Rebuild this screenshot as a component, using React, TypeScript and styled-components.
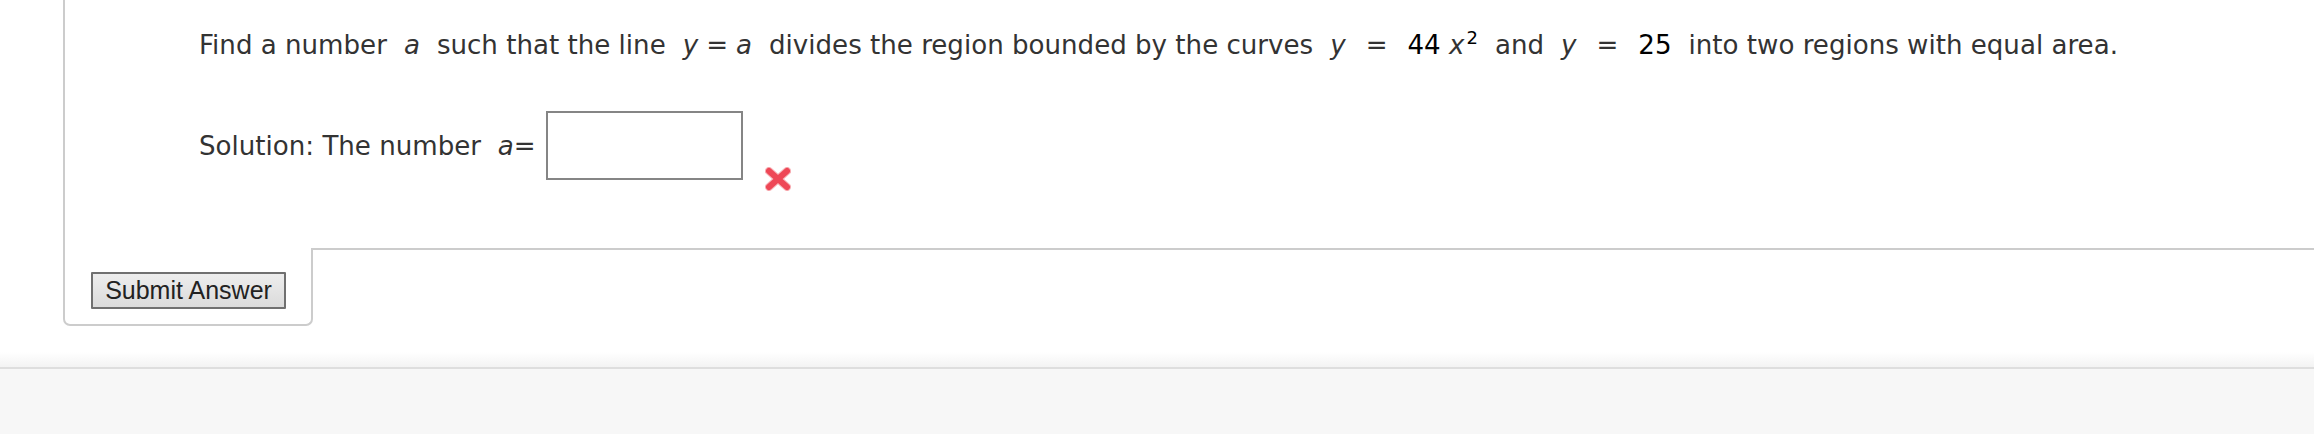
import React from 'react';
import styled, { createGlobalStyle } from 'styled-components';

const GlobalStyle = createGlobalStyle`
  html, body {
    margin: 0;
    padding: 0;
    background: #fff;
  }
  body {
    width: 2314px;
    height: 434px;
    overflow: hidden;
    font-family: "DejaVu Sans", Verdana, sans-serif;
    color: #333;
  }
`;

const Page = styled.div`
  display: flex;
  flex-direction: column;
  height: 434px;
`;

const Content = styled.main`
  height: 367px;
  padding-left: 63px;
  display: flex;
  flex-direction: column;
  background: linear-gradient(to bottom, #fff 0, #fff 352px, #f3f3f3 367px);
`;

const ProblemBody = styled.div`
  height: 248px;
  box-sizing: border-box;
  border-left: 2px solid #ccc;
  padding: 27px 0 0 134px;
`;

const Statement = styled.p`
  margin: 0;
  font-size: 26.1px;
  line-height: 36px;
  white-space: nowrap;
`;

const Math = styled.span`
  margin: 0 17px;
`;

const Var = styled.i`
  font-style: italic;
`;

const Num = styled.span`
  color: #000;
`;

const Rel = styled.span<{ wide?: boolean }>`
  margin: 0 ${({ wide }) => (wide ? 20 : 8)}px;
`;

const Sup = styled.sup`
  font-size: 18px;
  vertical-align: 10px;
  line-height: 0;
  margin-left: 2px;
  color: #000;
`;

const AnswerRow = styled.div`
  display: flex;
  align-items: center;
  margin-top: 48px;
  font-size: 26.1px;
  line-height: 36px;
  white-space: pre;
`;

const AnswerInput = styled.input`
  box-sizing: border-box;
  width: 197px;
  height: 69px;
  margin-left: 10px;
  border: 2px solid #858585;
  background: #fff;
  font: inherit;
  padding: 0 8px;
`;

const Mark = styled.span`
  align-self: flex-end;
  margin: 0 0 -12px 21px;
  display: inline-flex;
`;

const SubmitRow = styled.div`
  display: flex;
  height: 78px;
`;

const SubmitBox = styled.div`
  width: 250px;
  box-sizing: border-box;
  border: 2px solid #ccc;
  border-top: none;
  border-radius: 0 0 7px 7px;
  padding: 24px 0 0 26px;
`;

const Filler = styled.div`
  flex: 1;
  border-top: 2px solid #ccc;
`;

const SubmitButton = styled.button`
  box-sizing: border-box;
  width: 195px;
  height: 37px;
  padding: 0;
  border: 2px solid #707070;
  border-radius: 1px;
  background: linear-gradient(to bottom, #ededed, #dbdbdb);
  font-family: "Liberation Sans", Arial, sans-serif;
  font-size: 25px;
  color: #222;
  cursor: pointer;
`;

const Footer = styled.footer`
  flex: 1;
  background: #f7f7f7;
  border-top: 2px solid #dedede;
`;

const WrongIcon = () => (
  <svg width="28" height="26" viewBox="0 0 28 26">
    <g stroke="#f4838b" strokeWidth="8" strokeLinecap="round" opacity="0.6">
      <line x1="5" y1="5" x2="23" y2="21" />
      <line x1="23" y1="5" x2="5" y2="21" />
    </g>
    <g stroke="#ee4756" strokeWidth="6" strokeLinecap="round">
      <line x1="5" y1="5" x2="23" y2="21" />
      <line x1="23" y1="5" x2="5" y2="21" />
    </g>
  </svg>
);

export default function App() {
  return (
    <>
      <GlobalStyle />
      <Page>
        <Content>
          <ProblemBody>
            <Statement>
              Find a number<Math><Var>a</Var></Math>such that the line
              <Math><Var>y</Var><Rel>=</Rel><Var>a</Var></Math>divides the region bounded by the curves
              <Math><Var>y</Var><Rel wide>=</Rel><Num>44</Num> <Var>x</Var><Sup>2</Sup></Math>and
              <Math><Var>y</Var><Rel wide>=</Rel><Num>25</Num></Math>into two regions with equal area.
            </Statement>
            <AnswerRow>
              <span>Solution: The number  <Var>a</Var>=</span>
              <AnswerInput type="text" aria-label="a" />
              <Mark><WrongIcon /></Mark>
            </AnswerRow>
          </ProblemBody>
          <SubmitRow>
            <SubmitBox>
              <SubmitButton type="button">Submit Answer</SubmitButton>
            </SubmitBox>
            <Filler />
          </SubmitRow>
        </Content>
        <Footer />
      </Page>
    </>
  );
}
